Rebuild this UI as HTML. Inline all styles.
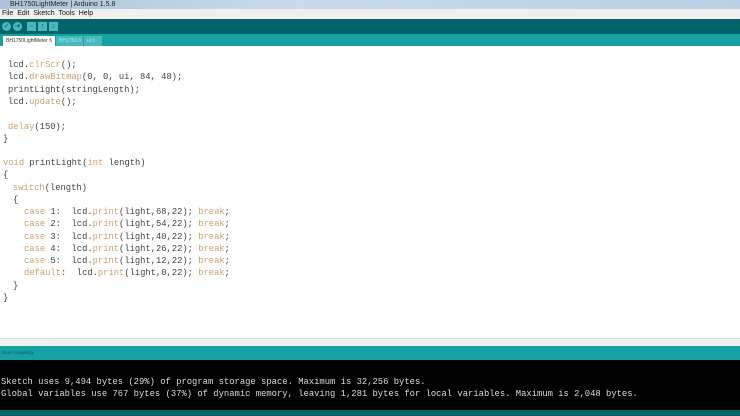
<!DOCTYPE html>
<html><head><meta charset="utf-8"><style>
*{margin:0;padding:0;box-sizing:border-box}
body{width:740px;height:416px;overflow:hidden;background:#fff;font-family:"Liberation Sans",sans-serif;position:relative}
.abs{position:absolute}
#title{top:0;left:0;width:740px;height:9px;background:linear-gradient(90deg,#a9c4dc,#c9dbea 40%,#b9cfe3);font-size:7px;color:#222;line-height:9px;padding-left:10px}
#menu{top:9px;left:0;width:740px;height:10px;background:#f0f0f0;font-size:7px;line-height:10px;color:#111;padding-left:2px;word-spacing:2px}
#tool{top:19px;left:0;width:740px;height:15px;background:#006468}
.btn{position:absolute;top:3px;width:9px;height:9px;background:#4db6ba;color:#006468;font-size:7px;line-height:9px;text-align:center}
#tabs{top:34px;left:0;width:740px;height:12px;background:#17a1a5}
.tab{position:absolute;top:2px;height:10px;font-size:5px;line-height:10px;padding:0 3px}
#ed{top:46px;left:0;width:740px;height:292px;background:#fff}
.ln{position:absolute;font-family:"Liberation Mono",monospace;font-size:8.8px;color:#444;white-space:pre;line-height:10px}
.k{color:#c8a070}
#scr{top:338px;left:0;width:740px;height:8px;background:#f0f0f0;border-top:1px solid #ddd}
#stat{top:346px;left:0;width:740px;height:14px;background:#17a1a5;font-size:4.5px;color:#0c5a5c;line-height:14px;padding-left:2px}
#con{top:360px;left:0;width:740px;height:50px;background:#000}
.c{position:absolute;left:1px;font-family:"Liberation Mono",monospace;font-size:8.85px;color:#ddd;white-space:pre;line-height:10px}
#bot{top:410px;left:0;width:740px;height:6px;background:#006468}
</style></head><body>
<div id="title" class="abs">BH1750LightMeter | Arduino 1.5.8</div>
<div id="menu" class="abs">File Edit Sketch Tools Help</div>
<div id="tool" class="abs">
<div class="btn" style="left:2px;border-radius:50%">✓</div>
<div class="btn" style="left:13px;border-radius:50%">➔</div>
<div class="btn" style="left:27px">▫</div>
<div class="btn" style="left:38px">↑</div>
<div class="btn" style="left:49px">↓</div>
</div>
<div id="tabs" class="abs">
<div class="tab" style="left:3px;width:52px;background:#fff;color:#333">BH1750LightMeter §</div>
<div class="tab" style="left:56px;width:27px;background:#4db6ba;color:#8fd">BH1750.h</div>
<div class="tab" style="left:84px;width:18px;background:#4db6ba;color:#8fd">ui.h</div>
</div>
<div id="ed" class="abs"></div>
<div class="ln" style="left:8px;top:60px">lcd.<span class="k">clrScr</span>();</div>
<div class="ln" style="left:8px;top:72px">lcd.<span class="k">drawBitmap</span>(0, 0, ui, 84, 48);</div>
<div class="ln" style="left:8px;top:85px">printLight(stringLength);</div>
<div class="ln" style="left:8px;top:97px">lcd.<span class="k">update</span>();</div>
<div class="ln" style="left:8px;top:122px"><span class="k">delay</span>(150);</div>
<div class="ln" style="left:3px;top:134px">}</div>
<div class="ln" style="left:3px;top:158px"><span class="k">void</span> printLight(<span class="k">int</span> length)</div>
<div class="ln" style="left:3px;top:170px">{</div>
<div class="ln" style="left:13px;top:183px"><span class="k">switch</span>(length)</div>
<div class="ln" style="left:13px;top:195px">{</div>
<div class="ln" style="left:24px;top:207px"><span class="k">case</span> 1:  lcd.<span class="k">print</span>(light,68,22); <span class="k">break</span>;</div>
<div class="ln" style="left:24px;top:219px"><span class="k">case</span> 2:  lcd.<span class="k">print</span>(light,54,22); <span class="k">break</span>;</div>
<div class="ln" style="left:24px;top:232px"><span class="k">case</span> 3:  lcd.<span class="k">print</span>(light,40,22); <span class="k">break</span>;</div>
<div class="ln" style="left:24px;top:244px"><span class="k">case</span> 4:  lcd.<span class="k">print</span>(light,26,22); <span class="k">break</span>;</div>
<div class="ln" style="left:24px;top:256px"><span class="k">case</span> 5:  lcd.<span class="k">print</span>(light,12,22); <span class="k">break</span>;</div>
<div class="ln" style="left:24px;top:268px"><span class="k">default</span>:  lcd.<span class="k">print</span>(light,0,22); <span class="k">break</span>;</div>
<div class="ln" style="left:13px;top:281px">}</div>
<div class="ln" style="left:3px;top:293px">}</div>
<div id="scr" class="abs"></div>
<div id="stat" class="abs">Done compiling.</div>
<div id="con" class="abs"></div>
<div class="c" style="top:377px">Sketch uses 9,494 bytes (29%) of program storage space. Maximum is 32,256 bytes.</div>
<div class="c" style="top:389px">Global variables use 767 bytes (37%) of dynamic memory, leaving 1,281 bytes for local variables. Maximum is 2,048 bytes.</div>
<div id="bot" class="abs"></div>
</body></html>
